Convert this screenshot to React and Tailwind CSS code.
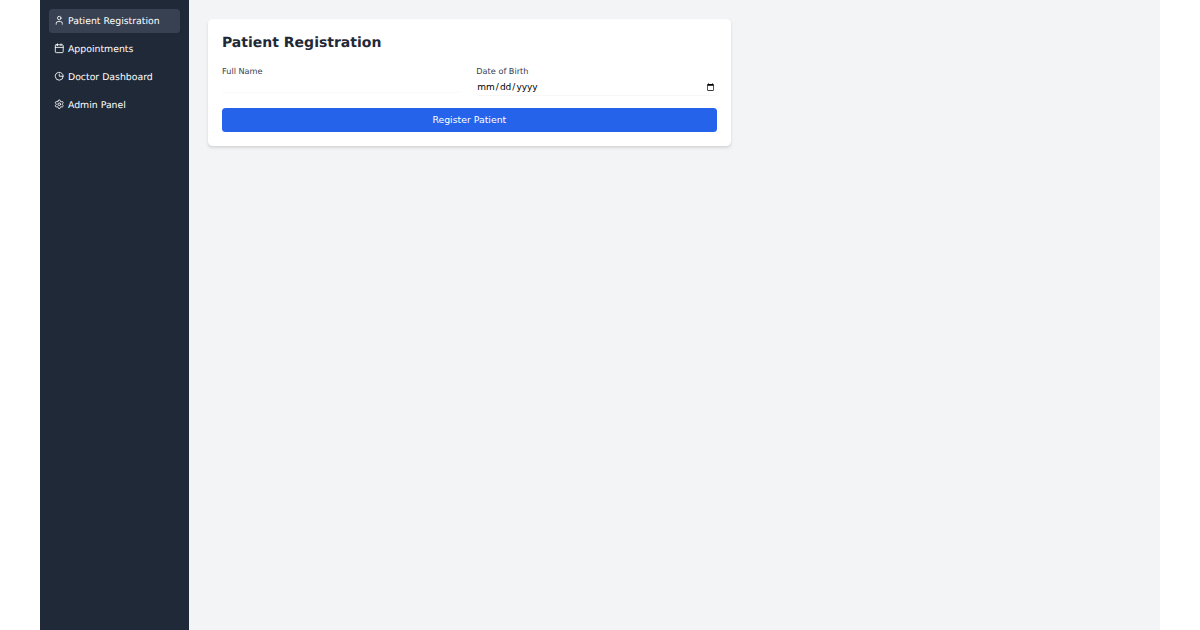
import React from "react";
import { User, Calendar, Settings } from "lucide-react";

function PieClock({ size = 10.5 }) {
  return (
    <svg width={size} height={size} viewBox="0 0 24 24" fill="none" stroke="currentColor" strokeWidth="2" strokeLinecap="round" strokeLinejoin="round">
      <path d="M21 12A9 9 0 1 1 10 3.2" />
      <path d="M12 3a9 9 0 0 1 9 9h-9V7" />
    </svg>
  );
}

const items = [
  { label: "Patient Registration", icon: <User size={10.5} />, active: true },
  { label: "Appointments", icon: <Calendar size={10.5} /> },
  { label: "Doctor Dashboard", icon: <PieClock size={10.5} /> },
  { label: "Admin Panel", icon: <Settings size={10.5} /> },
];

export default function App() {
  return (
    <div className="h-[630px] overflow-hidden bg-white font-['DejaVu_Sans',sans-serif] [text-rendering:geometricPrecision]">
      <div className="mx-auto flex h-full w-[1120px] bg-[#f3f4f6]">
        <aside className="flex w-[149.33px] shrink-0 flex-col gap-[4.67px] bg-[#1f2937] p-[9.33px] text-[9.33px] text-white">
          {items.map((it) => (
            <div
              key={it.label}
              className={`flex h-[23.33px] items-center gap-[3.5px] rounded-[3.5px] pl-[4.67px] ${it.active ? "bg-[#374151]" : ""}`}
            >
              <span className="mb-[1px] flex w-[10.5px] shrink-0 items-center justify-center">{it.icon}</span>
              <span className="mt-[1.4px] whitespace-nowrap">{it.label}</span>
            </div>
          ))}
        </aside>
        <main className="flex-1 p-[18.67px]">
          <div className="w-[522.67px] rounded-[4.67px] bg-white p-[14px] shadow-[0_2.33px_3.5px_-0.6px_rgba(0,0,0,0.1),0_1.2px_2.33px_-1.2px_rgba(0,0,0,0.1)]">
            <h2 className="mb-[13px] pt-[1px] text-[14px] leading-[18.67px] font-bold text-[#1f2937]">Patient Registration</h2>
            <div className="grid grid-cols-2 items-start gap-[14px]">
              <div>
                <label className="block pt-[1px] text-[8.17px] leading-[10.67px] text-[#374151]">Full Name</label>
                <input type="text" className="mt-[2.33px] block h-[13px] w-full rounded-[3.5px] bg-white text-[9.33px] shadow-[0_0.6px_1.2px_0_rgba(0,0,0,0.04)]" />
              </div>
              <div>
                <label className="block pt-[1px] text-[8.17px] leading-[10.67px] text-[#374151]">Date of Birth</label>
                <input type="date" defaultValue="" className="mt-[2.33px] block h-[16px] w-full rounded-[3.5px] bg-white text-[9px] shadow-[0_0.6px_1.2px_0_rgba(0,0,0,0.04)]" />
              </div>
            </div>
            <button className="mt-[13px] block h-[23.6px] w-full rounded-[3.5px] bg-[#2563eb] text-center text-[9.33px] text-white">Register Patient</button>
          </div>
        </main>
      </div>
    </div>
  );
}
